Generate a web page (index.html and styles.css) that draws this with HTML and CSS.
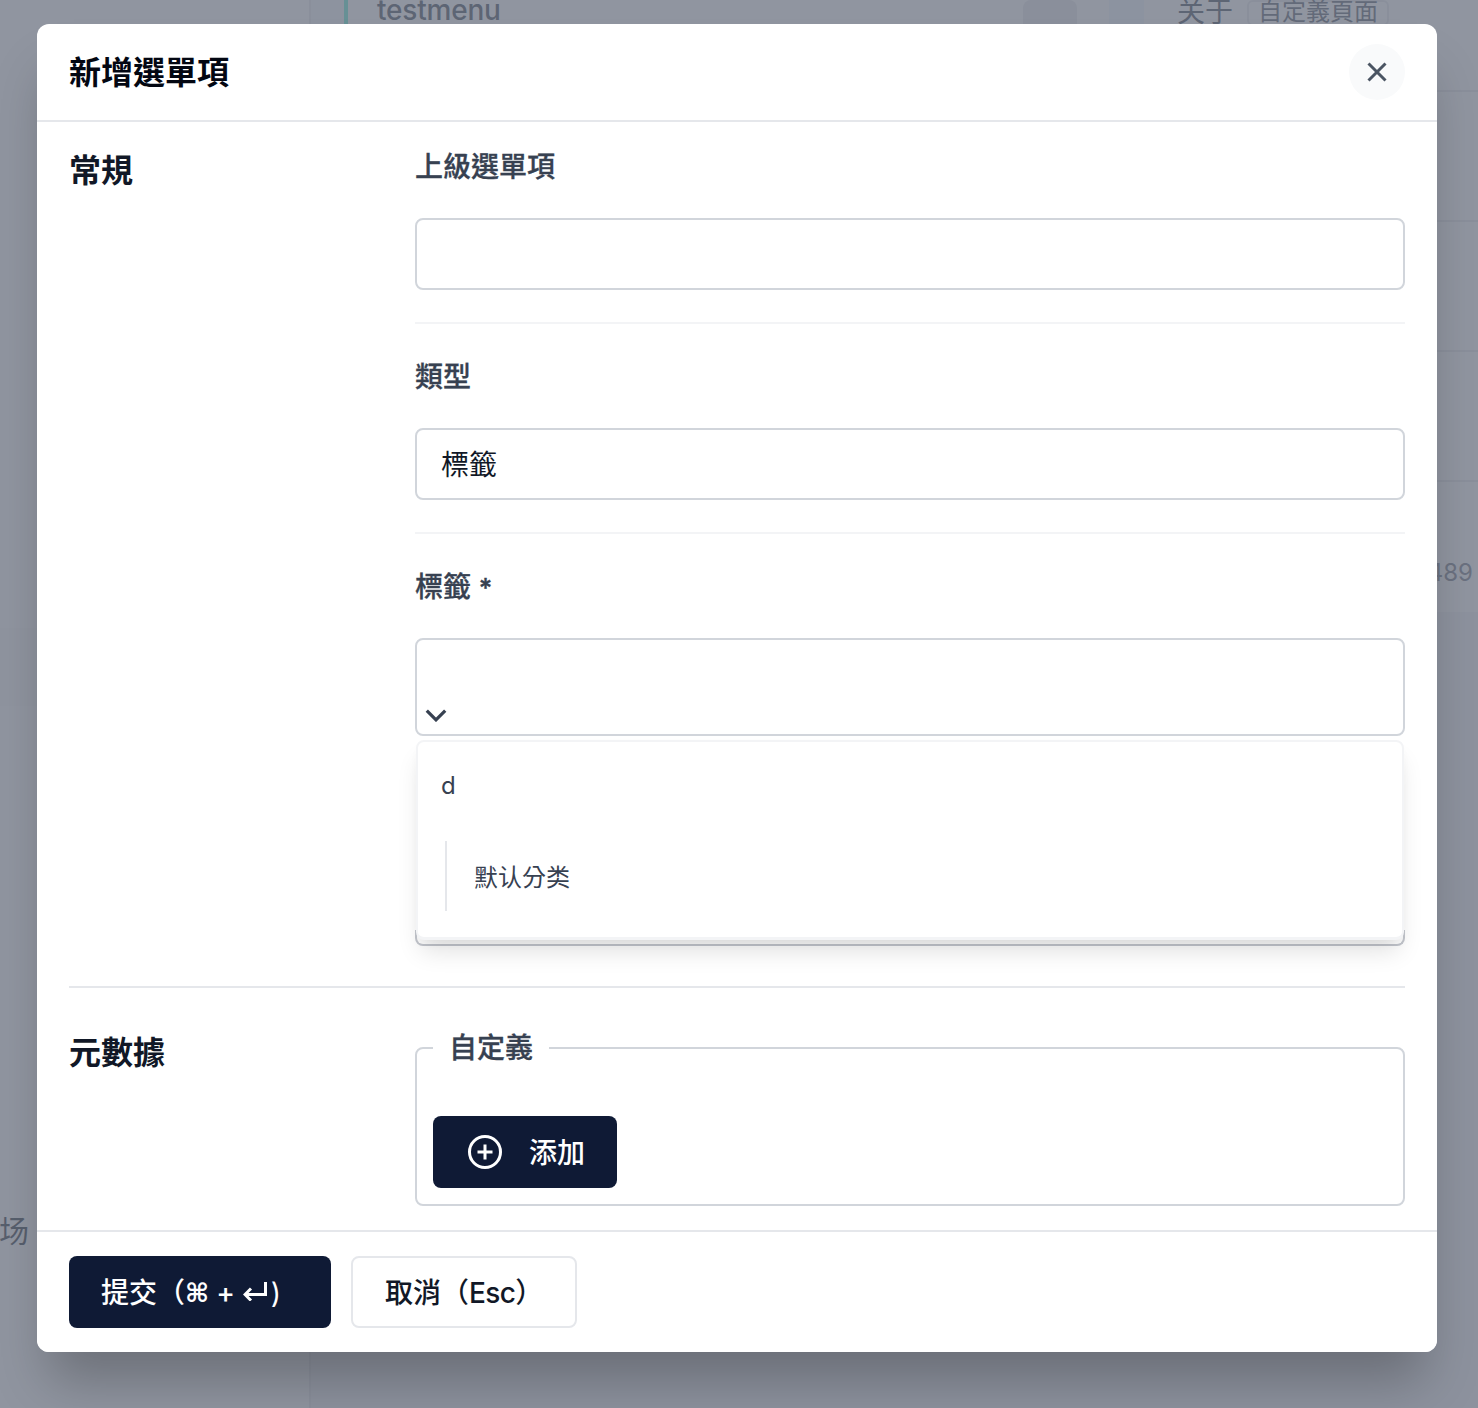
FILE: index.html
```html
<!DOCTYPE html>
<html lang="zh-Hant">
<head>
<meta charset="utf-8">
<title>新增選單項</title>
<link rel="stylesheet" href="styles.css">
</head>
<body>
<div class="page">
  <aside class="sidebar">
    <div class="side-active"></div>
    <div class="side-label">场</div>
  </aside>
  <main class="main">
    <div class="card">
      <div class="row row-first">
        <span class="tint"></span>
        <span class="accent"></span>
        <span class="row-name">testmenu</span>
        <span class="chip"></span>
        <span class="strip"></span>
        <span class="row-about">关于</span>
        <span class="row-tag">自定義頁面</span>
      </div>
      <div class="row row-mid"></div>
      <div class="row row-mid"></div>
      <div class="row row-mid"></div>
      <div class="row row-last"><span class="row-num">489</span></div>
    </div>
  </main>
</div>
<div class="overlay"></div>
<section class="modal">
  <header class="modal-head">
    <h2 class="modal-title">新增選單項</h2>
    <button class="close-btn" type="button" aria-label="關閉">
      <svg class="close-icon" viewBox="0 0 20 20"><path d="M1.5 1.5 18.5 18.5M18.5 1.5 1.5 18.5"/></svg>
    </button>
  </header>
  <div class="modal-body">
    <div class="section section-general">
      <h3 class="section-title">常規</h3>
      <div class="fields">
        <div class="field field-first">
          <label class="label">上級選單項</label>
          <div class="input"></div>
        </div>
        <div class="field">
          <label class="label">類型</label>
          <div class="input">標籤</div>
        </div>
        <div class="field field-last">
          <label class="label">標籤 <span class="star">*</span></label>
          <div class="select">
            <svg class="chevron" viewBox="0 0 20 12"><path d="M1.5 1.5 10 10 18.5 1.5"/></svg>
          </div>
          <div class="select-under"></div>
          <div class="dropdown">
            <div class="group-name">d</div>
            <div class="group-items"><div class="group-item">默认分类</div></div>
          </div>
        </div>
      </div>
    </div>
    <div class="section section-meta">
      <h3 class="section-title">元數據</h3>
      <fieldset class="fieldset">
        <legend class="legend">自定義</legend>
        <button class="btn btn-primary btn-add" type="button">
          <svg class="plus-icon" viewBox="0 0 40 40"><circle cx="20" cy="20" r="15.5"/><path d="M20 12.5V27.5M12.5 20H27.5"/></svg>
          <span class="btn-text">添加</span>
        </button>
      </fieldset>
    </div>
  </div>
  <footer class="modal-foot">
    <button class="btn btn-primary btn-submit" type="button">
      <span class="btn-text">提交（</span><span class="btn-text sym">⌘</span><span class="btn-text plus-sign">+</span>
      <svg class="return-icon" viewBox="0 0 24 20"><path d="M22.5 1V13.5H2M8 7.5 2 13.5 8 19.5"/></svg>
      <span class="btn-text close-paren">)</span>
    </button>
    <button class="btn btn-outline btn-cancel" type="button"><span class="btn-text">取消（<span class="esc">Esc</span>）</span></button>
  </footer>
</section>
</body>
</html>
```
FILE: styles.css
```css
* { box-sizing: border-box; }
html, body { margin: 0; padding: 0; }
body {
  width: 1478px;
  height: 1408px;
  overflow: hidden;
  position: relative;
  font-family: Inter, "Noto Sans CJK TC", "Noto Sans CJK SC", sans-serif;
  color: #111827;
  background: #f3f4f6;
}
.page { display: flex; height: 1408px; }
.sidebar {
  width: 311px;
  flex: none;
  background: #fff;
  border-right: 2px solid #e5e7eb;
  display: flex;
  flex-direction: column;
  padding-top: 628px;
}
.side-active { height: 78px; background: #f9fafb; }
.side-label {
  margin: 503px 0 0 -1px;
  font-size: 30px;
  line-height: 40px;
  color: #1f2937;
  font-family: "Noto Sans CJK SC", sans-serif;
}
.main { flex: 1; min-width: 0; }
.card { background: #fff; height: 612px; }
.row { border-bottom: 2px solid #e5e7eb; display: flex; align-items: center; }
.row-first { height: 92px; align-items: flex-start; }
.row-mid { height: 130px; }
.row-last { height: 130px; border-bottom: 0; justify-content: flex-end; }
.tint { width: 33px; height: 92px; background: #f4f7fb; flex: none; }
.accent { width: 4px; height: 92px; background: #5eead4; flex: none; }
.row-name { margin-left: 29px; font-size: 28px; line-height: 20px; font-weight: 500; letter-spacing: -.2px; color: #374151; width: 646px; flex: none; }
.chip { width: 54px; height: 40px; background: #e5e7eb; border-radius: 8px; flex: none; }
.strip { width: 35px; height: 92px; margin-left: 32px; background: #eff6ff; flex: none; }
.row-about { margin-left: 33px; font-size: 28px; line-height: 20px; color: #374151; font-family: "Noto Sans CJK SC", sans-serif; }
.row-tag {
  margin-left: 14px;
  font-size: 24px;
  line-height: 20px;
  height: 26px;
  padding: 0 9px;
  color: #4b5563;
  border: 2px solid #e5e7eb;
  border-radius: 6px;
}
.row-num { margin-right: 5px; margin-top: 50px; font-size: 24px; color: #6b7280; }

.overlay { position: absolute; inset: 0; background: rgba(107, 114, 128, .75); }

.modal {
  position: absolute;
  left: 37px;
  top: 24px;
  width: 1400px;
  height: 1328px;
  background: #fff;
  border-radius: 12px;
  overflow: hidden;
  display: flex;
  flex-direction: column;
  box-shadow: 0 40px 50px -12px rgba(0, 0, 0, .25);
}
.modal-head {
  flex: none;
  height: 98px;
  border-bottom: 2px solid #e5e7eb;
  display: flex;
  align-items: center;
  justify-content: space-between;
  padding: 0 32px;
}
.modal-title { margin: 2px 0 0; font-size: 32px; line-height: 48px; font-weight: 700; color: #030712; }
.close-btn {
  width: 56px;
  height: 56px;
  border: 0;
  border-radius: 50%;
  background: #f9fafb;
  display: flex;
  align-items: center;
  justify-content: center;
  padding: 0;
}
.close-icon { width: 20px; height: 20px; fill: none; stroke: #4b5563; stroke-width: 3; }

.modal-body { flex: 1; min-height: 0; overflow: hidden; padding: 0 32px; }
.section { display: grid; grid-template-columns: 346px 990px; }
.section-general { border-bottom: 2px solid #e5e7eb; padding-bottom: 40px; }
.section-meta { padding-top: 40px; }
.section-title { margin: 5px 0 0; font-size: 32px; line-height: 40px; font-weight: 600; color: #111827; }
.section-general .section-title { margin-top: 29px; }

.field { padding: 32px 0; border-bottom: 2px solid #f3f4f6; }
.field-first { padding-top: 24px; }
.field-last { padding-bottom: 0; border-bottom: 0; position: relative; }
.label {
  display: block;
  height: 42px;
  font-size: 28px;
  line-height: 42px;
  font-weight: 500;
  -webkit-text-stroke: .3px #374151;
  color: #374151;
  margin-bottom: 30px;
}
.star { font-size: 26px; line-height: 1; font-weight: 600; }
.input {
  height: 72px;
  border: 2px solid #d1d5db;
  border-radius: 8px;
  padding: 0 24px;
  font-size: 28px;
  line-height: 70px;
  color: #111827;
}
.select {
  height: 98px;
  border: 2px solid #d1d5db;
  border-radius: 8px;
  position: relative;
}
.chevron {
  position: absolute;
  left: 8px;
  top: 69px;
  width: 22px;
  height: 13px;
  fill: none;
  stroke: #374151;
  stroke-width: 3;
}
.select-under {
  height: 16px;
  margin-top: 194px;
  border: 2px solid #c4c7ce;
  border-top: 0;
  border-radius: 0 0 8px 8px;
}
.dropdown {
  position: absolute;
  left: 1px;
  right: 1px;
  top: 206px;
  height: 200px;
  background: #fff;
  border: 2px solid #f3f4f6;
  border-bottom-width: 3px;
  border-radius: 8px;
  box-shadow: 0 16px 24px -5px rgba(0, 0, 0, .12), 0 6px 12px -4px rgba(0, 0, 0, .05);
}
.group-name {
  margin: 26px 0 0 23px;
  font-size: 24px;
  line-height: 36px;
  color: #374151;
}
.group-items {
  margin: 37px 0 0 27px;
  height: 70px;
  border-left: 2px solid #e5e7eb;
  padding-left: 27px;
  display: flex;
  align-items: center;
}
.group-item { font-family: "Noto Sans CJK SC", sans-serif; font-size: 24px; line-height: 36px; color: #374151; }

.fieldset {
  margin: 0;
  min-width: 0;
  padding: 48px 16px 16px;
  height: 178px;
  border: 2px solid #d1d5db;
  border-radius: 8px;
}
.legend {
  padding: 0 16px;
  margin-left: 0;
  font-size: 28px;
  line-height: 40px;
  font-weight: 500;
  -webkit-text-stroke: .3px #374151;
  color: #374151;
}

.btn {
  height: 72px;
  border-radius: 8px;
  font-family: inherit;
  font-size: 28px;
  line-height: 40px;
  font-weight: 500;
  display: inline-flex;
  align-items: center;
  white-space: nowrap;
}
.btn-text { margin-top: 2px; }
.btn-primary { background: #0f1a35; color: #fff; border: 0; }
.btn-add { display: flex; width: 184px; padding: 0 32px; gap: 24px; }
.plus-icon { width: 40px; height: 40px; fill: none; stroke: #fff; stroke-width: 3; flex: none; }
.modal-foot {
  flex: none;
  height: 122px;
  border-top: 2px solid #e5e7eb;
  padding: 24px 32px;
  display: flex;
  gap: 20px;
  background: #fff;
}
.btn-submit { width: 262px; padding: 0 32px; }
.btn-cancel { width: 226px; padding: 0 32px; background: #fff; color: #111827; border: 2px solid #e5e7eb; }
.esc { letter-spacing: -.6px; }
.sym { font-family: "DejaVu Sans", sans-serif; font-size: 26px; font-weight: 700; }
.plus-sign { margin-left: 7px; }
.return-icon { width: 24px; height: 20px; margin-left: 8px; margin-top: -2px; fill: none; stroke: #fff; stroke-width: 3; flex: none; }
.close-paren { margin-left: 4px; font-weight: 400; }
```
